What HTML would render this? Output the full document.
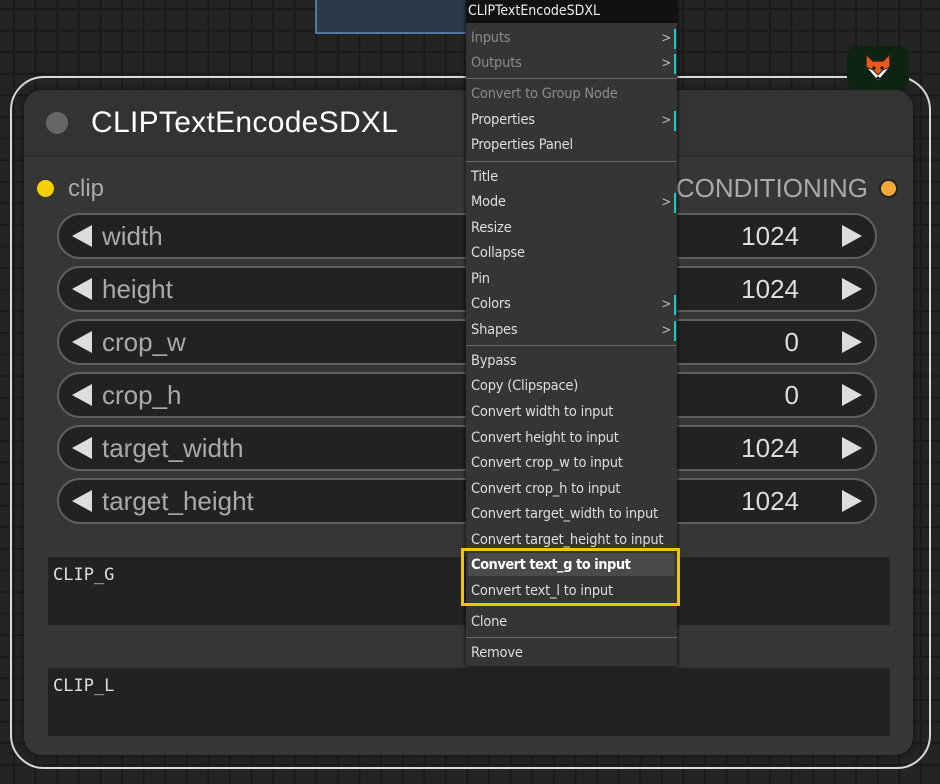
<!DOCTYPE html>
<html><head><meta charset="utf-8"><style>
*{margin:0;padding:0;box-sizing:border-box}
body{width:940px;height:784px;overflow:hidden;position:relative;background-color:#242424;
background-image:linear-gradient(90deg,#1a1a1a 2px,transparent 2px),linear-gradient(#1a1a1a 2px,transparent 2px);
background-size:21.6px 21.6px;background-position:13px 8px;font-family:"Liberation Sans",sans-serif}
.a{position:absolute}
.w{position:absolute;left:57px;width:820px;height:46px;border:2px solid #5f5f5f;border-radius:23px;background:#222}
.w .l{position:absolute;left:43px;top:6px;font-size:26px;color:#a9a9a9}
.w .v{position:absolute;right:76px;top:6px;font-size:26px;color:#ddd}
.w .tl{position:absolute;left:13px;top:10px;width:0;height:0;border-top:11px solid transparent;border-bottom:11px solid transparent;border-right:20px solid #ddd}
.w .tr{position:absolute;right:13px;top:10px;width:0;height:0;border-top:11px solid transparent;border-bottom:11px solid transparent;border-left:20px solid #ddd}
.ta{position:absolute;left:48px;width:842px;height:68px;background:#222;font-family:"DejaVu Sans Mono","Liberation Mono",monospace;font-size:17px;color:#ddd;padding:8px 5px}
.m{position:absolute;left:466px;width:211px;font-size:14.5px;color:#ddd;height:25px;line-height:25px;padding-left:5px;font-family:"DejaVu Sans Condensed","Liberation Sans",sans-serif;letter-spacing:-0.2px}
.m.d{color:#8a8a8a}
.ar{position:absolute;right:6px;top:0;color:#bbb;font-size:13px}
.ar:after{content:"";position:absolute;right:-5px;top:3px;width:2px;height:20px;background:#1cc}
.sep{position:absolute;left:466px;width:211px;height:1px;background:#666}
</style></head><body>
<div class="a" style="left:315px;top:-2px;width:160px;height:36px;background:#2b3a48;border:2px solid #4f7a9e"></div>
<div class="a" style="left:10px;top:76px;width:921px;height:693px;border:2px solid #d8d8d8;border-radius:34px"></div>
<div class="a" style="left:24px;top:90px;width:889px;height:665px;background:#363636;border-radius:18px;box-shadow:0 0 6px #111"></div>
<div class="a" style="left:24px;top:90px;width:889px;height:67px;background:#333;border-radius:18px 18px 0 0;border-bottom:2px solid #2c2c2c"></div>
<div class="a" style="left:46px;top:112px;width:22px;height:22px;border-radius:50%;background:#666"></div>
<div class="a" style="left:91px;top:106px;font-size:30px;color:#fff;letter-spacing:0.3px">CLIPTextEncodeSDXL</div>
<div class="a" style="left:37px;top:180px;width:17px;height:17px;border-radius:50%;background:#f5cf00"></div>
<div class="a" style="left:68px;top:175px;font-size:24px;color:#aaa">clip</div>
<div class="a" style="right:72px;top:173px;font-size:26px;color:#aaa">CONDITIONING</div>
<div class="a" style="left:879px;top:179px;width:19px;height:19px;border-radius:50%;background:#f5a83a;border:2px solid #222"></div>
<div class="w" style="top:213px"><div class="tl"></div><div class="l">width</div><div class="v">1024</div><div class="tr"></div></div>
<div class="w" style="top:266px"><div class="tl"></div><div class="l">height</div><div class="v">1024</div><div class="tr"></div></div>
<div class="w" style="top:319px"><div class="tl"></div><div class="l">crop_w</div><div class="v">0</div><div class="tr"></div></div>
<div class="w" style="top:372px"><div class="tl"></div><div class="l">crop_h</div><div class="v">0</div><div class="tr"></div></div>
<div class="w" style="top:425px"><div class="tl"></div><div class="l">target_width</div><div class="v">1024</div><div class="tr"></div></div>
<div class="w" style="top:478px"><div class="tl"></div><div class="l">target_height</div><div class="v">1024</div><div class="tr"></div></div>
<div class="ta" style="top:557px">CLIP_G</div>
<div class="ta" style="top:668px">CLIP_L</div>
<div class="a" style="left:847px;top:46px;width:62px;height:44px;background:#0e2412;border-radius:10px"></div>
<svg class="a" style="left:864px;top:53px" width="28" height="30" viewBox="0 0 28 30">
<polygon points="2,1 9,8 19,8 26,1 26,14 14,28 2,14" fill="#ee5a14" stroke="#222" stroke-width="1.5"/>
<polygon points="2,14 9,17 14,22 19,17 26,14 14,28" fill="#fff" stroke="#222" stroke-width="1"/>
<circle cx="10" cy="15" r="1.6" fill="#111"/><circle cx="18" cy="15" r="1.6" fill="#111"/>
<circle cx="14" cy="25" r="1.5" fill="#111"/></svg>
<div class="a" style="left:466px;top:0;width:211px;height:666px;background:#353535;box-shadow:0 0 4px #000"></div>
<div class="a" style="left:466px;top:0;width:211px;height:23px;background:#111;color:#eee;font-size:14px;line-height:23px;padding-left:2px;font-family:'DejaVu Sans Condensed','Liberation Sans',sans-serif">CLIPTextEncodeSDXL</div>
<div class="m d" style="top:26px">Inputs<span class="ar">&gt;</span></div>
<div class="m d" style="top:51px">Outputs<span class="ar">&gt;</span></div>
<div class="sep" style="top:78px"></div>
<div class="m d" style="top:82px">Convert to Group Node</div>
<div class="m" style="top:108px">Properties<span class="ar">&gt;</span></div>
<div class="m" style="top:133px">Properties Panel</div>
<div class="sep" style="top:161px"></div>
<div class="m" style="top:165px">Title</div>
<div class="m" style="top:190px">Mode<span class="ar">&gt;</span></div>
<div class="m" style="top:216px">Resize</div>
<div class="m" style="top:241px">Collapse</div>
<div class="m" style="top:267px">Pin</div>
<div class="m" style="top:292px">Colors<span class="ar">&gt;</span></div>
<div class="m" style="top:318px">Shapes<span class="ar">&gt;</span></div>
<div class="sep" style="top:345px"></div>
<div class="m" style="top:349px">Bypass</div>
<div class="m" style="top:374px">Copy (Clipspace)</div>
<div class="m" style="top:400px">Convert width to input</div>
<div class="m" style="top:426px">Convert height to input</div>
<div class="m" style="top:451px">Convert crop_w to input</div>
<div class="m" style="top:477px">Convert crop_h to input</div>
<div class="m" style="top:502px">Convert target_width to input</div>
<div class="m" style="top:528px">Convert target_height to input</div>
<div class="a" style="left:468px;top:553px;width:206px;height:23px;background:#4a4a4a"></div>
<div class="m" style="top:553px;color:#fff;font-weight:bold;letter-spacing:-0.5px">Convert text_g to input</div>
<div class="m" style="top:579px">Convert text_l to input</div>
<div class="a" style="left:461px;top:548px;width:219px;height:58px;border:3px solid #f5c400"></div>
<div class="sep" style="top:637px"></div>
<div class="m" style="top:610px">Clone</div>
<div class="m" style="top:641px">Remove</div>
</body></html>
